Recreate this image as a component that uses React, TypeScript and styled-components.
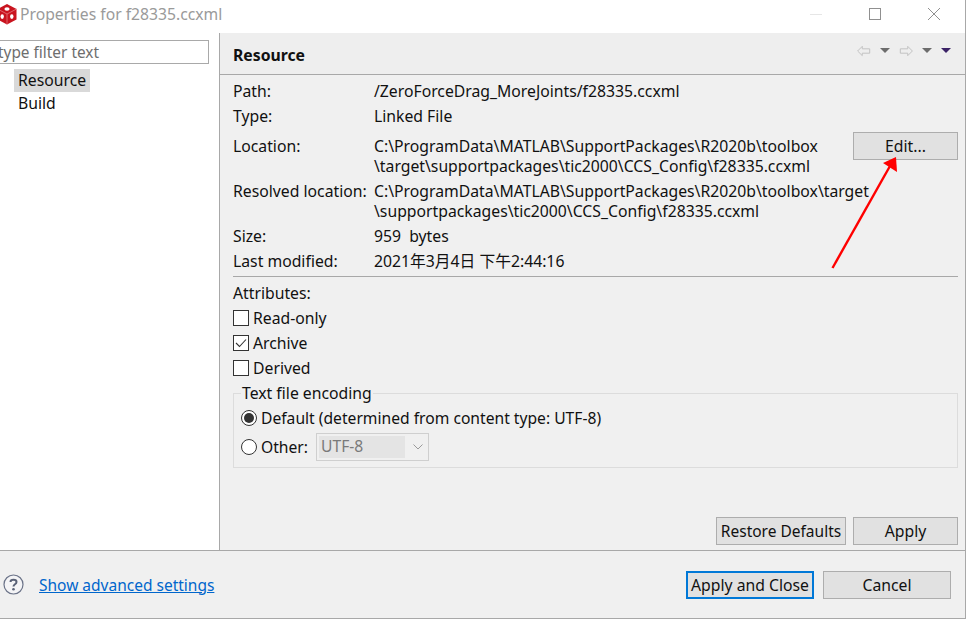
import React from 'react';
import styled, { createGlobalStyle } from 'styled-components';

const GlobalStyle = createGlobalStyle`
  html, body {
    margin: 0;
    padding: 0;
    background: #ffffff;
    overflow: hidden;
  }
  * {
    box-sizing: border-box;
  }
`;

const Dialog = styled.div`
  position: relative;
  width: 966px;
  height: 619px;
  display: flex;
  flex-direction: column;
  font-family: "Noto Sans", "Noto Sans CJK SC", sans-serif;
  font-size: 15.75px;
  line-height: 20px;
  color: #111111;
  border-right: 1px solid #a8a8a8;
  border-bottom: 1px solid #a8a8a8;
  overflow: hidden;
`;

const TitleBar = styled.div`
  height: 33px;
  flex: none;
  display: flex;
  align-items: center;
  background: #ffffff;
  margin-left: -5px;
  padding-bottom: 5px;
`;

const AppIcon = styled.svg`
  width: 24px;
  height: 24px;
  flex: none;
  margin-right: 1px;
`;

const TitleText = styled.span`
  color: #9a9a9a;
  font-size: 15.7px;
`;

const WindowButtons = styled.div`
  margin-left: auto;
  display: flex;
  align-items: center;
  color: #9a9a9a;
`;

const WindowButton = styled.svg<{ $size?: number }>`
  width: ${p => p.$size || 14}px;
  height: ${p => p.$size || 14}px;
  display: block;
  margin-right: 46px;
  &:last-child {
    margin-right: 24px;
  }
`;

const Body = styled.div`
  flex: 1;
  min-height: 0;
  display: flex;
`;

const TreePane = styled.div`
  width: 219px;
  flex: none;
  background: #ffffff;
  padding-top: 7px;
`;

const FilterInput = styled.div`
  width: 219px;
  height: 24px;
  margin-left: -10px;
  padding-left: 7px;
  border: 1px solid #a9a9a9;
  color: #6e6e6e;
  font-size: 15.4px;
  line-height: 24px;
`;

const TreeList = styled.div`
  display: flex;
  flex-direction: column;
  align-items: flex-start;
  padding: 5px 0 0 14px;
`;

const TreeItem = styled.div<{ $selected?: boolean }>`
  height: 23px;
  padding: 0 4px;
  line-height: 23px;
  background: ${p => (p.$selected ? '#d9d9d9' : 'transparent')};
`;

const ContentPane = styled.div`
  flex: 1;
  min-width: 0;
  display: flex;
  flex-direction: column;
  background: #f0f0f0;
  border-left: 1px solid #a8a8a8;
`;

const PageHeader = styled.div`
  height: 42px;
  flex: none;
  display: flex;
  align-items: center;
  justify-content: space-between;
  padding: 2px 14px 0 13px;
  background: #eeeeee;
  border-bottom: 1px solid #a8a8a8;
`;

const PageTitle = styled.span`
  font-weight: 700;
  font-size: 15.75px;
`;

const HistoryTools = styled.div`
  display: flex;
  align-items: center;
  gap: 9px;
  margin-bottom: 8px;
`;

const HistoryIcon = styled.svg`
  width: 14px;
  height: 12px;
  display: block;
`;

const Caret = styled.span<{ $color?: string }>`
  width: 0;
  height: 0;
  border-left: 5px solid transparent;
  border-right: 5px solid transparent;
  border-top: 5px solid ${p => p.$color || '#6c6c6c'};
`;

const Main = styled.div`
  flex: 1;
  min-height: 0;
  display: flex;
  flex-direction: column;
  padding: 6px 7px 5px 13px;
`;

const InfoRows = styled.div`
  display: flex;
  flex-direction: column;
  gap: 5px;
  padding-bottom: 5px;
  border-bottom: 1px solid #a8a8a8;
`;

const InfoRow = styled.div`
  display: flex;
  align-items: flex-start;
`;

const InfoLabel = styled.div`
  width: 141px;
  flex: none;
`;

const InfoValue = styled.div`
  flex: 1;
  white-space: nowrap;
`;

const LocationRow = styled(InfoRow)`
  margin-top: 5px;
  position: relative;
`;

const EditCol = styled.div`
  position: absolute;
  right: 0;
  top: -4px;
`;

const PushButton = styled.button<{ $width: number; $default?: boolean; $tight?: boolean }>`
  width: ${p => p.$width}px;
  height: 28px;
  padding: 0;
  font: inherit;
  font-size: ${p => (p.$tight ? '15.5px' : 'inherit')};
  color: #111111;
  background: #e1e1e1;
  border: ${p => (p.$default ? '2px solid #0078d7' : '1px solid #adadad')};
`;

const SectionLabel = styled.div`
  margin-top: 6px;
`;

const CheckList = styled.div`
  display: flex;
  flex-direction: column;
  gap: 5px;
  margin-top: 5px;
`;

const CheckRow = styled.label`
  display: flex;
  align-items: center;
  height: 20px;
  gap: 4px;
`;

const CheckBox = styled.span`
  width: 16px;
  height: 16px;
  flex: none;
  background: #ffffff;
  border: 1px solid #333333;
  display: flex;
  align-items: center;
  justify-content: center;
`;

const GroupBox = styled.fieldset`
  margin: 5px 0 0;
  padding: 5px 0 0 7px;
  height: 85px;
  border: 1px solid #dcdcdc;
  min-inline-size: auto;
`;

const GroupLegend = styled.legend`
  margin-left: 0;
  padding: 0 1px;
  line-height: 20px;
`;

const RadioRow = styled.label`
  display: flex;
  align-items: center;
  gap: 4px;
  height: 20px;
  margin-bottom: 9px;
  font-size: 15.65px;
`;

const Radio = styled.span<{ $checked?: boolean }>`
  width: 16px;
  height: 16px;
  flex: none;
  border-radius: 50%;
  border: 1px solid #333333;
  background: #ffffff;
  display: flex;
  align-items: center;
  justify-content: center;
  &::after {
    content: '';
    display: ${p => (p.$checked ? 'block' : 'none')};
    width: 10px;
    height: 10px;
    border-radius: 50%;
    background: #333333;
  }
`;

const Select = styled.div`
  width: 113px;
  height: 28px;
  margin-left: 4px;
  padding: 2px;
  display: flex;
  align-items: center;
  background: #f0f0f0;
  border: 1px solid #cfcfcf;
  color: #7a7a7a;
`;

const SelectValue = styled.div`
  width: 86px;
  height: 22px;
  padding-left: 2px;
  line-height: 21px;
  background: #e4e4e4;
`;

const SelectArrow = styled.svg`
  width: 10px;
  height: 6px;
  margin-left: 8px;
`;

const PageActions = styled.div`
  margin-top: auto;
  display: flex;
  justify-content: flex-end;
  gap: 7px;
`;

const Footer = styled.div`
  height: 68px;
  flex: none;
  display: flex;
  align-items: center;
  padding: 3px 14px 3px 3px;
  background: #f0f0f0;
  border-top: 1px solid #a8a8a8;
`;

const HelpIcon = styled.svg`
  width: 21px;
  height: 21px;
  flex: none;
  margin-right: 15px;
`;

const AdvancedLink = styled.a`
  color: #0066cc;
  text-decoration: underline;
  font-size: 15.5px;
`;

const FooterActions = styled.div`
  margin-left: auto;
  display: flex;
  gap: 9px;
`;

const Annotation = styled.svg`
  position: absolute;
  left: 825px;
  top: 150px;
  width: 80px;
  height: 125px;
  pointer-events: none;
`;

export default function App() {
  return (
    <>
      <GlobalStyle />
      <Dialog>
        <TitleBar>
          <AppIcon viewBox="0 0 24 24">
            <path d="M12 2 L21.5 7 V17.5 L12 22.5 L2.5 17.5 V7 Z" fill="#c9141f" />
            <path d="M12 12 V22.5 M12 12 L21.5 7 M12 12 L2.5 7" stroke="#e8858b" strokeWidth="0.7" fill="none" />
            <ellipse cx="12" cy="7" rx="2.6" ry="1.8" fill="#ffffff" />
            <ellipse cx="7.2" cy="14.6" rx="1.7" ry="2.3" fill="#ffffff" />
            <ellipse cx="16.8" cy="14.6" rx="1.7" ry="2.3" fill="#ffffff" />
          </AppIcon>
          <TitleText>Properties for f28335.ccxml</TitleText>
          <WindowButtons>
            <WindowButton viewBox="0 0 14 14">
              <path d="M1 7.5 H13" stroke="#e6e6e6" strokeWidth="1" />
            </WindowButton>
            <WindowButton viewBox="0 0 12 12" $size={12}>
              <rect x="0.5" y="0.5" width="11" height="11" fill="none" stroke="#909090" />
            </WindowButton>
            <WindowButton viewBox="0 0 14 14">
              <path d="M1 1 L13 13 M13 1 L1 13" stroke="#909090" strokeWidth="1" />
            </WindowButton>
          </WindowButtons>
        </TitleBar>
        <Body>
          <TreePane>
            <FilterInput>type filter text</FilterInput>
            <TreeList>
              <TreeItem $selected>Resource</TreeItem>
              <TreeItem>Build</TreeItem>
            </TreeList>
          </TreePane>
          <ContentPane>
            <PageHeader>
              <PageTitle>Resource</PageTitle>
              <HistoryTools>
                <HistoryIcon viewBox="0 0 16 12">
                  <path d="M0.7 6 L6 0.7 V3.5 H14.5 V8.5 H6 V11.3 Z" fill="none" stroke="#bdbdbd" />
                </HistoryIcon>
                <Caret />
                <HistoryIcon viewBox="0 0 16 12">
                  <path d="M15.3 6 L10 0.7 V3.5 H1.5 V8.5 H10 V11.3 Z" fill="none" stroke="#bdbdbd" />
                </HistoryIcon>
                <Caret />
                <Caret $color="#3b2266" />
              </HistoryTools>
            </PageHeader>
            <Main>
              <InfoRows>
                <InfoRow>
                  <InfoLabel>Path:</InfoLabel>
                  <InfoValue>/ZeroForceDrag_MoreJoints/f28335.ccxml</InfoValue>
                </InfoRow>
                <InfoRow>
                  <InfoLabel>Type:</InfoLabel>
                  <InfoValue>Linked File</InfoValue>
                </InfoRow>
                <LocationRow>
                  <InfoLabel>Location:</InfoLabel>
                  <InfoValue>
                    C:\ProgramData\MATLAB\SupportPackages\R2020b\toolbox
                    <br />
                    \target\supportpackages\tic2000\CCS_Config\f28335.ccxml
                  </InfoValue>
                  <EditCol>
                    <PushButton $width={105}>Edit...</PushButton>
                  </EditCol>
                </LocationRow>
                <InfoRow>
                  <InfoLabel>Resolved location:</InfoLabel>
                  <InfoValue>
                    C:\ProgramData\MATLAB\SupportPackages\R2020b\toolbox\target
                    <br />
                    \supportpackages\tic2000\CCS_Config\f28335.ccxml
                  </InfoValue>
                </InfoRow>
                <InfoRow>
                  <InfoLabel>Size:</InfoLabel>
                  <InfoValue>959&nbsp; bytes</InfoValue>
                </InfoRow>
                <InfoRow>
                  <InfoLabel>Last modified:</InfoLabel>
                  <InfoValue>2021年3月4日 下午2:44:16</InfoValue>
                </InfoRow>
              </InfoRows>
              <SectionLabel>Attributes:</SectionLabel>
              <CheckList>
                <CheckRow>
                  <CheckBox />
                  Read-only
                </CheckRow>
                <CheckRow>
                  <CheckBox>
                    <svg width="12" height="10" viewBox="0 0 12 10">
                      <path d="M1 5 L4.5 8.5 L11 1.5" fill="none" stroke="#333" strokeWidth="1.1" />
                    </svg>
                  </CheckBox>
                  Archive
                </CheckRow>
                <CheckRow>
                  <CheckBox />
                  Derived
                </CheckRow>
              </CheckList>
              <GroupBox>
                <GroupLegend>Text file encoding</GroupLegend>
                <RadioRow>
                  <Radio $checked />
                  Default (determined from content type: UTF-8)
                </RadioRow>
                <RadioRow>
                  <Radio />
                  Other:
                  <Select>
                    <SelectValue>UTF-8</SelectValue>
                    <SelectArrow viewBox="0 0 10 6">
                      <path d="M0.5 0.5 L5 5 L9.5 0.5" fill="none" stroke="#9a9a9a" />
                    </SelectArrow>
                  </Select>
                </RadioRow>
              </GroupBox>
              <PageActions>
                <PushButton $width={130} $tight>Restore Defaults</PushButton>
                <PushButton $width={105}>Apply</PushButton>
              </PageActions>
            </Main>
          </ContentPane>
        </Body>
        <Footer>
          <HelpIcon viewBox="0 0 21 21">
            <circle cx="10.5" cy="10.5" r="9.5" fill="#f4f4f6" stroke="#6b7388" strokeWidth="1.2" />
            <path d="M7.5 8 C7.5 5 13.5 5 13.5 8 C13.5 10.5 10.5 10 10.5 12.5" fill="none" stroke="#5a6277" strokeWidth="2" />
            <circle cx="10.5" cy="15.3" r="1.3" fill="#5a6277" />
          </HelpIcon>
          <AdvancedLink>Show advanced settings</AdvancedLink>
          <FooterActions>
            <PushButton $width={128} $default>Apply and Close</PushButton>
            <PushButton $width={128}>Cancel</PushButton>
          </FooterActions>
        </Footer>
        <Annotation viewBox="0 0 80 125">
          <path d="M7.5 118 L65 16" stroke="#ff0000" strokeWidth="2.4" fill="none" />
          <path d="M71 7 L58 13 L72 22 Z" fill="#ff0000" />
        </Annotation>
      </Dialog>
    </>
  );
}
